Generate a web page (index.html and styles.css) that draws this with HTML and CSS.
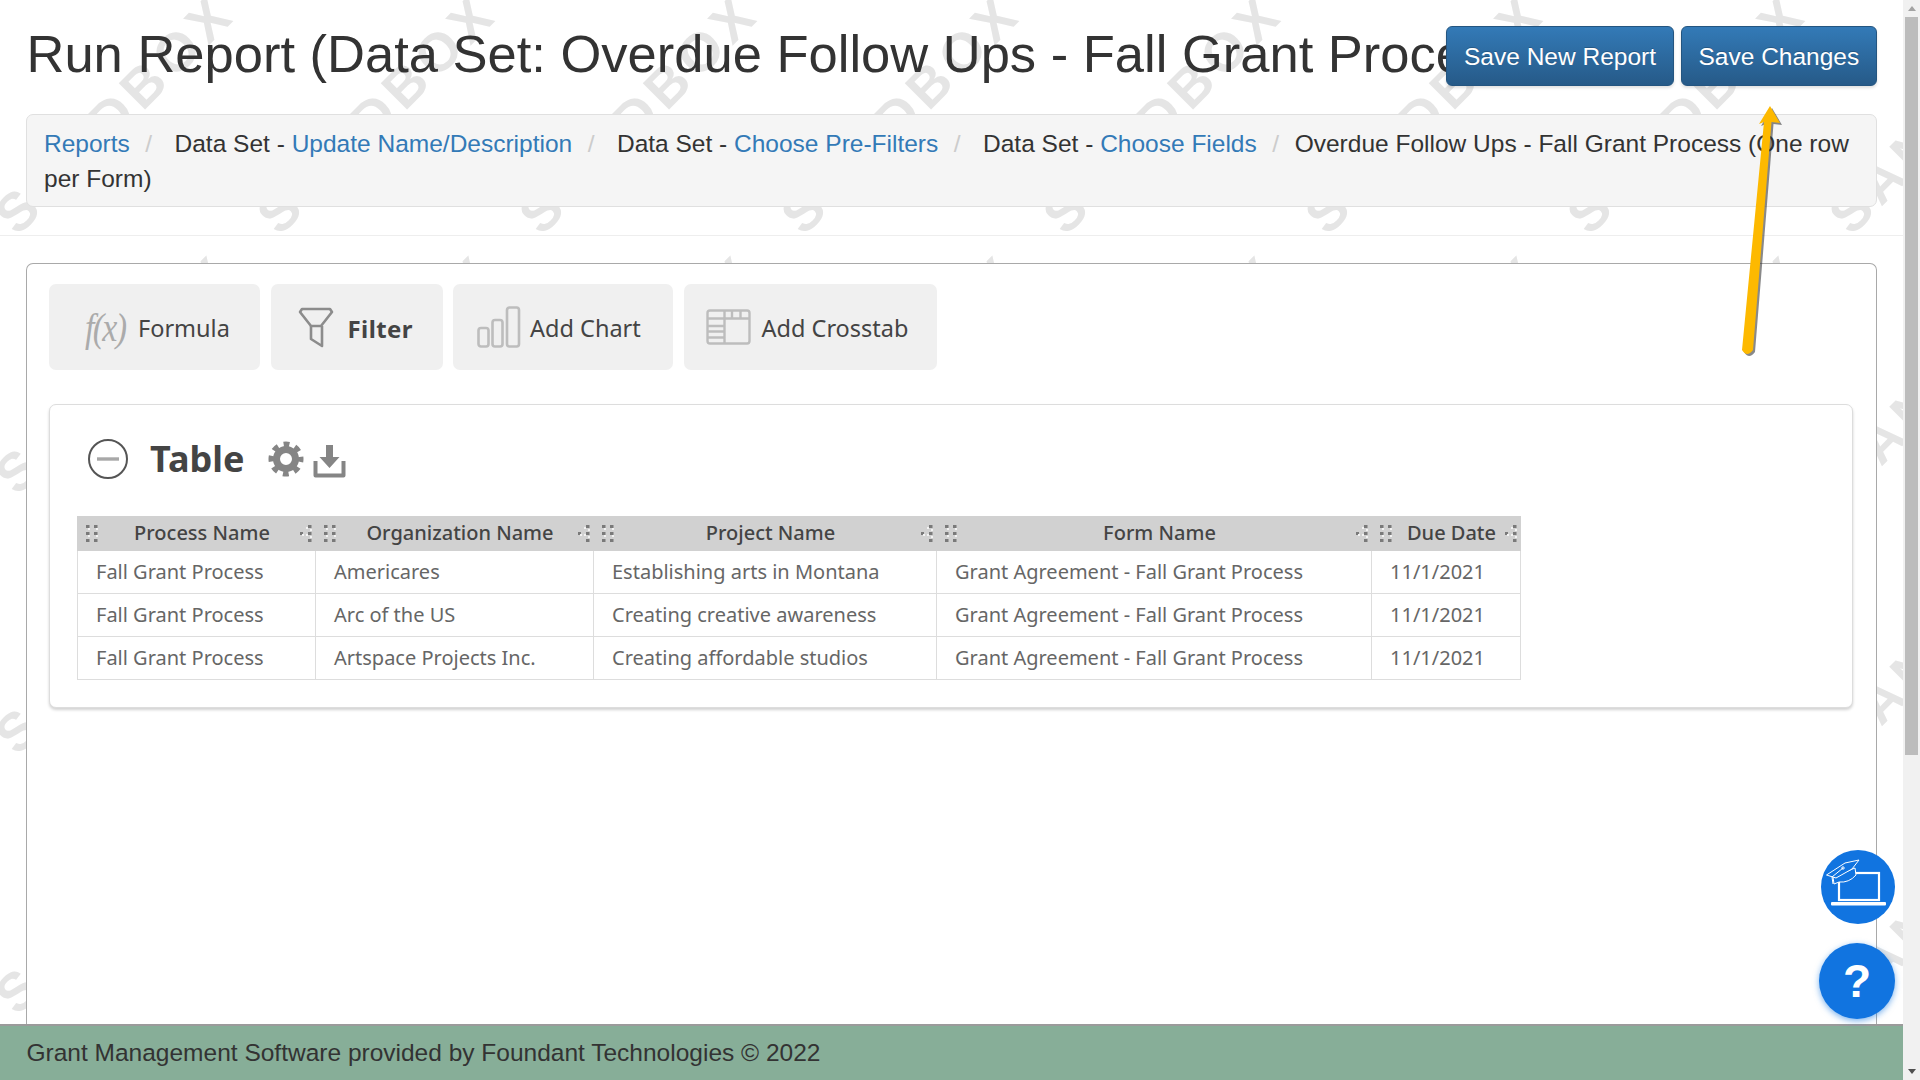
FILE: index.html
```html
<!DOCTYPE html>
<html lang="en">
<head>
<meta charset="utf-8">
<title>Run Report</title>
<link rel="stylesheet" href="styles.css">
</head>
<body>
<svg class="defs" width="0" height="0" aria-hidden="true">
  <defs>
    <symbol id="grip" viewBox="0 0 14 18">
      <g fill="#7a7a7a"><rect x="1" y="1" width="3.500" height="3"/><rect x="9" y="1" width="3.500" height="3"/><rect x="1" y="8" width="3.500" height="3"/><rect x="9" y="8" width="3.500" height="3"/><rect x="1" y="15" width="3.500" height="3"/><rect x="9" y="15" width="3.500" height="3"/></g>
      <g fill="#f2f2f2"><rect x="3" y="4" width="2" height="2"/><rect x="11" y="4" width="2" height="2"/><rect x="3" y="11" width="2" height="2"/><rect x="11" y="11" width="2" height="2"/></g>
    </symbol>
    <symbol id="resize" viewBox="0 0 14 18">
      <g fill="#7a7a7a"><rect x="1" y="8" width="3" height="3"/><rect x="9" y="1" width="3.500" height="3"/><rect x="9" y="8" width="3.500" height="3"/><rect x="9" y="15" width="3.500" height="3"/></g>
      <g fill="#f2f2f2"><rect x="3" y="10" width="2" height="2"/><rect x="7" y="3" width="2" height="2"/><rect x="7" y="10" width="2" height="2"/><rect x="11" y="5" width="2" height="2"/><rect x="11" y="12" width="2" height="2"/></g>
    </symbol>
  </defs>
</svg>
<div class="viewport">
  <div class="page">
    <svg class="watermark" width="100%" height="100%" aria-hidden="true">
      <defs>
        <pattern id="wm" width="262" height="260" patternUnits="userSpaceOnUse">
          <g class="wm-text">
            <text transform="translate(115 114) rotate(-45)" text-anchor="middle" dy="18">SANDBOX</text>
            <text transform="translate(377 114) rotate(-45)" text-anchor="middle" dy="18">SANDBOX</text>
            <text transform="translate(115 374) rotate(-45)" text-anchor="middle" dy="18">SANDBOX</text>
            <text transform="translate(-147 114) rotate(-45)" text-anchor="middle" dy="18">SANDBOX</text>
            <text transform="translate(115 -146) rotate(-45)" text-anchor="middle" dy="18">SANDBOX</text>
          </g>
        </pattern>
      </defs>
      <rect width="100%" height="100%" fill="url(#wm)"/>
    </svg>

    <header class="top">
      <h1 class="title">Run Report (Data Set: Overdue Follow Ups - Fall Grant Process (One row per Form))</h1>
      <div class="actions">
        <button class="btn">Save New Report</button>
        <button class="btn">Save Changes</button>
      </div>
    </header>

    <nav class="crumbs"><a href="#">Reports</a> <span class="sep">/&nbsp;</span>&nbsp;Data Set - <a href="#">Update Name/Description</a> <span class="sep">/&nbsp;</span>&nbsp;Data Set - <a href="#">Choose Pre-Filters</a> <span class="sep">/&nbsp;</span>&nbsp;Data Set - <a href="#">Choose Fields</a> <span class="sep">/&nbsp;</span>Overdue Follow Ups - Fall Grant Process (One row per Form)</nav>

    <hr class="rule">

    <main class="card">
      <div class="tools">
        <div class="tool tool-formula"><span class="fx">f(x)</span><span>Formula</span></div>
        <div class="tool tool-filter">
          <svg class="ico" width="38" height="42" viewBox="0 0 38 42" fill="none" stroke="#8c8c8c" stroke-width="2.6" stroke-linejoin="round"><path d="M5 2h28l2 3-11 14H14L3 5z"/><path d="M14 19v13l11 7V19"/></svg>
          <span class="strong">Filter</span>
        </div>
        <div class="tool tool-chart">
          <svg class="ico ico-chart" width="44" height="42" viewBox="0 0 44 42" fill="none" stroke="#bdbdbd" stroke-width="2.6"><rect x="1.5" y="22" width="10" height="18.5" rx="2.5"/><rect x="15.5" y="14" width="10" height="26.5" rx="2.5"/><rect x="30" y="1.5" width="12" height="39" rx="2.5"/></svg>
          <span>Add Chart</span>
        </div>
        <div class="tool tool-cross">
          <svg class="ico" width="45" height="36" viewBox="0 0 45 36" fill="none" stroke="#bdbdbd" stroke-width="2.4"><rect x="1.5" y="1.5" width="42" height="33" rx="2.5"/><path d="M1.500 9.500h42M18.500 1.500v33M1.500 17h17M1.500 22.500h17M1.500 28.500h17M26 1.500v8M34.500 1.500v8"/></svg>
          <span>Add Crosstab</span>
        </div>
      </div>

      <section class="panel">
        <div class="panel-head">
          <svg class="collapse" width="40" height="40" viewBox="0 0 40 40" fill="none"><circle cx="20" cy="20" r="19" stroke="#555" stroke-width="2"/><path d="M9 20h22" stroke="#a8a8a8" stroke-width="3.4"/></svg>
          <h2 class="panel-title">Table</h2>
          <svg class="gear" width="36" height="36" viewBox="0 0 36 36" fill="none" stroke="#858585"><circle cx="18" cy="18" r="9.5" stroke-width="7"/><circle cx="18" cy="18" r="14.5" stroke-width="6" stroke-dasharray="5.7 5.69" stroke-dashoffset="2.8"/></svg>
          <svg class="download" width="33" height="34" viewBox="0 0 33 34"><path d="M2.500 17v14.500h28V17" fill="none" stroke="#858585" stroke-width="4" stroke-linejoin="round"/><path d="M13 1h7v12h6.500L16.500 24 6.500 13H13z" fill="#858585"/></svg>
        </div>
        <table class="grid">
          <colgroup><col class="c1"><col class="c2"><col class="c3"><col class="c4"><col class="c5"></colgroup>
          <thead>
            <tr>
              <th><svg class="grip"><use href="#grip"/></svg>Process Name<svg class="resize"><use href="#resize"/></svg></th>
              <th><svg class="grip"><use href="#grip"/></svg>Organization Name<svg class="resize"><use href="#resize"/></svg></th>
              <th><svg class="grip"><use href="#grip"/></svg>Project Name<svg class="resize"><use href="#resize"/></svg></th>
              <th><svg class="grip"><use href="#grip"/></svg>Form Name<svg class="resize"><use href="#resize"/></svg></th>
              <th><svg class="grip"><use href="#grip"/></svg>Due Date<svg class="resize"><use href="#resize"/></svg></th>
            </tr>
          </thead>
          <tbody>
            <tr><td>Fall Grant Process</td><td>Americares</td><td>Establishing arts in Montana</td><td>Grant Agreement - Fall Grant Process</td><td>11/1/2021</td></tr>
            <tr><td>Fall Grant Process</td><td>Arc of the US</td><td>Creating creative awareness</td><td>Grant Agreement - Fall Grant Process</td><td>11/1/2021</td></tr>
            <tr><td>Fall Grant Process</td><td>Artspace Projects Inc.</td><td>Creating affordable studios</td><td>Grant Agreement - Fall Grant Process</td><td>11/1/2021</td></tr>
          </tbody>
        </table>
      </section>
    </main>

    <footer class="foot">Grant Management Software provided by Foundant Technologies © 2022</footer>

    <svg class="arrow" width="52" height="260" viewBox="0 0 52 260" aria-hidden="true">
      <path class="arrow-shadow" d="M37 4 47 21 38.500 20 20 248Q14 256 9 248L31 20 26 22Z"/>
      <path class="arrow-fill" d="M35 2 45 19 36.500 18 18 246Q12 254 7 246L29 18 24 20Z"/>
    </svg>

    <div class="fab fab-learn">
      <svg width="74" height="74" viewBox="0 0 74 74" fill="none" stroke="#fff">
        <rect x="18" y="23" width="40" height="27" stroke-width="2.200"/>
        <rect x="10" y="52" width="55" height="3.500" fill="#fff" stroke="none" rx="1"/>
        <path d="M12 27 13 34 18 32Q28 33 35 25L34 18Z" fill="#1174e0" stroke-width="1"/>
        <path d="M5.500 25 24 13 38 10 31 19 15 28Z" fill="#1174e0" stroke-width="1"/>
        <path d="M22 18 11 27 12 34" stroke-width="1"/>
        <circle cx="22" cy="18" r="1.200" stroke-width="1"/>
      </svg>
    </div>
    <div class="fab fab-help">?</div>
  </div>

  <aside class="scrollbar" aria-hidden="true">
    <span class="arrow-up"></span>
    <span class="thumb"></span>
    <span class="arrow-down"></span>
  </aside>
</div>
</body>
</html>
```

FILE: styles.css
```css
* { box-sizing: border-box; }
html, body { margin: 0; height: 100%; background: #fff; overflow: hidden; }
body { font-family: "Liberation Sans", Arial, sans-serif; color: #333; }
.defs { position: absolute; }

.viewport { display: flex; height: 1080px; }
.page {
  position: relative;
  isolation: isolate;
  flex: 1;
  min-width: 0;
  display: flex;
  flex-direction: column;
  padding-top: 26px;
  overflow: hidden;
}
.watermark { position: absolute; left: 0; top: 0; z-index: -1; }
.wm-text { font: 700 54px "Liberation Sans", sans-serif; fill: #e5e5e5; letter-spacing: 6px; }

.top { display: flex; margin: 0 26px 0 26.5px; height: 60px; }
.title {
  flex: 1;
  min-width: 0;
  margin: 0;
  font-size: 52.5px;
  font-weight: 400;
  line-height: 56px;
  height: 60px;
  white-space: nowrap;
  overflow: hidden;
}
.actions { display: flex; gap: 7px; flex: none; }
.btn {
  height: 60px;
  padding: 2px 16.75px 0;
  font: 24.5px "Liberation Sans", Arial, sans-serif;
  color: #fff;
  text-shadow: 0 -1px 0 rgba(0,0,0,.2);
  background: linear-gradient(#337ab7, #265a88);
  border: 1px solid #245580;
  border-radius: 6px;
  box-shadow: 0 2px 3px rgba(0,0,0,.12);
}

.crumbs {
  margin: 28px 26px 0;
  padding: 11px 17px;
  height: 93px;
  font-size: 24.5px;
  line-height: 35px;
  background: #f5f5f5;
  border: 1px solid #e0e0e0;
  border-radius: 7px;
}
.crumbs a { color: #337ab7; text-decoration: none; }
.sep { color: #ccc; padding: 0 8.75px; }

.rule { width: 100%; height: 1px; margin: 28px 0 27px; border: 0; background: #eee; }

.card {
  flex: 1;
  min-height: 0;
  margin: 0 26px;
  padding: 20px 0 0 22px;
  background: #fff;
  border: 1px solid #a9a9a9;
  border-bottom: 0;
  border-radius: 7px 7px 0 0;
}

.tools { display: flex; height: 86px; gap: 10.5px; font: 23.5px "Noto Sans", sans-serif; color: #444; white-space: nowrap; }
.tool {
  display: flex;
  align-items: center;
  background: #f0f0f0;
  border-radius: 7px;
}
.tool span { padding-top: 2px; }
.tool-formula { width: 211px; padding-left: 36px; }
.tool-filter { width: 172px; padding-left: 26px; }
.tool-chart { width: 220px; padding-left: 24px; }
.tool-cross { width: 253px; padding-left: 22px; }
.ico { flex: none; margin-right: 11px; }
.ico-chart { margin-right: 9px; }
.tool-filter .ico { margin-right: 13px; margin-top: 2px; }
.fx {
  font: italic 400 40px/1 "Liberation Serif", serif;
  color: #ababab;
  margin-right: 10px;
  letter-spacing: -2px;
  transform: scaleX(.85);
  transform-origin: left center;
  width: 43px;
}
.strong { font-weight: 700; font-size: 24px; letter-spacing: .4px; }

.panel {
  width: 1804px;
  height: 304px;
  margin: 34px 0 0;
  padding: 0 27px;
  background: #fff;
  border: 1px solid #ddd;
  border-radius: 7px;
  box-shadow: 0 2px 3px rgba(0,0,0,.18);
}
.panel-head { display: flex; align-items: center; height: 111px; padding-bottom: 4px; }
.collapse { margin-left: 11px; margin-right: 22px; flex: none; }
.panel-title { margin: 0 25px 0 0; font: 700 36px "Noto Sans", sans-serif; color: #444; width: 93px; }
.gear { flex: none; margin-right: 9px; }
.download { flex: none; margin-top: 4px; }

.grid { width: 1443px; table-layout: fixed; border-collapse: collapse; font: 20px "Noto Sans", sans-serif; }
.c1 { width: 238px; } .c2 { width: 278px; } .c3 { width: 343px; } .c4 { width: 435px; } .c5 { width: 149px; }
.grid th {
  position: relative;
  height: 34px;
  padding: 0 18px 2px 29px;
  font-weight: 500;
  color: #444;
  background: #d1d1d1;
  border: 1px solid #d1d1d1;
  white-space: nowrap;
}
.grid td {
  height: 43px;
  padding: 0 0 2px 18px;
  color: #666;
  border: 1px solid #ddd;
  white-space: nowrap;
}
.grip, .resize { position: absolute; top: 7px; width: 14px; height: 18px; }
.grip { left: 7px; }
.resize { right: 2px; }

.foot {
  flex: none;
  height: 56px;
  padding-left: 26.5px;
  font-size: 24.5px;
  line-height: 54px;
  color: #333;
  background: #87ae98;
  border-top: 2px solid #9b9b9b;
}

.arrow { position: absolute; left: 1735px; top: 104px; }
.arrow-shadow { fill: rgba(40,40,40,.55); }
.arrow-fill { fill: #fdb900; }

.fab { position: absolute; display: flex; align-items: center; justify-content: center; color: #fff; background: #1174e0; border-radius: 50%; }
.fab-learn { left: 1821px; top: 850px; width: 74px; height: 74px; }
.fab-help {
  left: 1819px;
  top: 943px;
  width: 76px;
  height: 76px;
  font: 700 46px "Liberation Sans", sans-serif;
  box-shadow: 0 2px 6px rgba(17,116,224,.55);
}

.scrollbar { flex: none; width: 17px; height: 1080px; background: #f1f1f1; display: flex; flex-direction: column; align-items: center; padding-top: 6px; }
.thumb { width: 13px; height: 738px; margin-top: 6px; background: #bcbcbc; }
.arrow-up, .arrow-down { width: 0; height: 0; border-left: 4px solid transparent; border-right: 4px solid transparent; }
.arrow-up { border-bottom: 5px solid #a3a3a3; }
.arrow-down { border-top: 5px solid #505050; margin-top: auto; margin-bottom: 6px; }
```
